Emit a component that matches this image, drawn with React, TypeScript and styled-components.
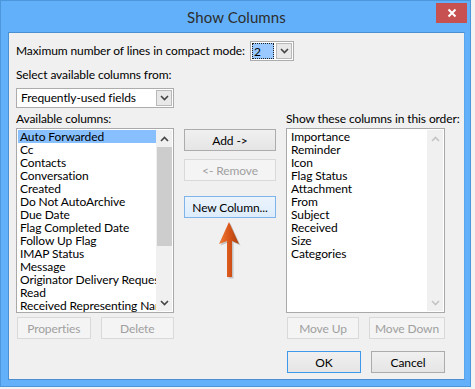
import React from "react";
import styled, { createGlobalStyle } from "styled-components";

const GlobalStyle = createGlobalStyle`
  html, body {
    margin: 0;
    padding: 0;
    background: #f3f3f3;
  }
  body {
    font-family: Lato, "Noto Sans", sans-serif;
    font-size: 12px;
    letter-spacing: -0.1px;
    color: #000;
  }
`

const Frame = styled.div`
  width: 471px;
  height: 387px;
  box-sizing: border-box;
  background: #62b0f9;
  border: 1px solid #4c96dc;
  display: flex;
  flex-direction: column;
  padding: 0 5px 6px 7px;
`

const TitleBar = styled.div`
  height: 31px;
  display: grid;
  grid-template-columns: 1fr auto 1fr;
  align-items: start;
`

const Title = styled.div`
  grid-column: 2;
  margin-top: 7px;
  font-size: 15px;
  color: #2d2d2d;
  letter-spacing: 0.1px;
`

const CloseButton = styled.div`
  grid-column: 3;
  justify-self: end;
  margin-top: 2px;
  margin-right: -2px;
  width: 31px;
  height: 20px;
  background: #c75050;
  display: flex;
  align-items: center;
  justify-content: center;
`

const Content = styled.div`
  flex: 1;
  background: #f0f0f0;
  border: 1px solid #4a8fd0;
  border-right-color: #5aa5ee;
  box-sizing: border-box;
  padding: 8px 0 0 7px;
  position: relative;
`

const Row = styled.div<{ $mt?: number }>`
  display: flex;
  align-items: center;
  gap: 5px;
  margin-top: ${p => p.$mt ?? 0}px;
`

const Label = styled.div<{ $mt?: number }>`
  height: 16px;
  line-height: 16px;
  white-space: nowrap;
  margin-top: ${p => p.$mt ?? 0}px;
`

const Combo = styled.div<{ $w: number }>`
  width: ${p => p.$w}px;
  height: 20px;
  box-sizing: border-box;
  border: 1px solid #acacac;
  background: #fff;
  display: flex;
  align-items: center;
  padding: 1px;
  gap: 2px;
`

const ComboValue = styled.div<{ $selected?: boolean }>`
  flex: 1;
  height: 16px;
  line-height: 15px;
  box-sizing: border-box;
  padding-left: ${p => (p.$selected ? 1 : 3)}px;
  background: ${p => (p.$selected ? "#99c9ff" : "transparent")};
  border: ${p => (p.$selected ? "1px dotted #222" : "none")};
`

const ComboButton = styled.div`
  width: 16px;
  height: 16px;
  box-sizing: border-box;
  border: 1px solid #b9b9b9;
  background: #e8e8e8;
  display: flex;
  align-items: center;
  justify-content: center;
`

const Grid = styled.div`
  display: grid;
  grid-template-columns: 158px 92px 159px;
  column-gap: 10px;
  margin-top: 3px;
`

const ListBox = styled.div`
  height: 185px;
  box-sizing: border-box;
  border: 1px solid #a9a9a9;
  background: #fff;
  display: flex;
  margin-top: 1px;
`

const Items = styled.div<{ $pad: number }>`
  flex: 1;
  min-width: 0;
  padding: 1px 0 0 1px;
  overflow: hidden;
  & > div {
    padding-left: ${p => p.$pad}px;
  }
`

const Item = styled.div<{ $selected?: boolean }>`
  height: 13px;
  line-height: 13px;
  white-space: nowrap;
  overflow: hidden;
  background: ${p => (p.$selected ? "#88c0ff" : "transparent")};
`

const ScrollBar = styled.div`
  width: 16px;
  margin: 1px 1px 1px 0;
  background: #f0f0f0;
  display: flex;
  flex-direction: column;
  align-items: center;
`

const ScrollArrow = styled.div`
  height: 17px;
  width: 16px;
  display: flex;
  align-items: center;
  justify-content: center;
`

const ScrollTrack = styled.div`
  flex: 1;
  width: 16px;
  display: flex;
  flex-direction: column;
`

const Thumb = styled.div`
  height: 99px;
  width: 15px;
  margin-left: 1px;
  background: #cdcdcd;
`

const Middle = styled.div`
  display: flex;
  flex-direction: column;
  padding-top: 2px;
`

const Btn = styled.div<{ $kind?: "normal" | "disabled" | "focus" | "default"; $w?: number; $mt?: number }>`
  width: ${p => (p.$w ? `${p.$w}px` : "100%")};
  height: 22px;
  margin-top: ${p => p.$mt ?? 0}px;
  box-sizing: border-box;
  display: flex;
  align-items: center;
  justify-content: center;
  white-space: nowrap;
  border: 1px solid
    ${p =>
      p.$kind === "disabled" ? "#d9d9d9" : p.$kind === "focus" ? "#7eb4ea" : p.$kind === "default" ? "#3c99ec" : "#acacac"};
  background: ${p =>
    p.$kind === "disabled"
      ? "#f4f4f4"
      : p.$kind === "focus"
      ? "linear-gradient(#ecf4fc, #dcecfc)"
      : "linear-gradient(#f0f0f0, #e5e5e5)"};
  color: ${p => (p.$kind === "disabled" ? "#a0a0a0" : "#000")};
`

const ButtonPair = styled.div<{ $mt: number; $gap: number }>`
  display: flex;
  gap: ${p => p.$gap}px;
  margin-top: ${p => p.$mt}px;
  padding-left: 1px;
`

const ArrowMark = styled.svg`
  position: absolute;
  left: 208px;
  top: 188px;
`

const Chevron = ({ color = "#444", up = false }: { color?: string; up?: boolean }) => (
  <svg width="9" height="6" viewBox="0 0 9 6">
    <path
      d={up ? "M1 5 L4.5 1.5 L8 5" : "M1 1 L4.5 4.5 L8 1"}
      fill="none"
      stroke={color}
      strokeWidth="1.6"
    />
  </svg>
)

const available = [
  "Auto Forwarded",
  "Cc",
  "Contacts",
  "Conversation",
  "Created",
  "Do Not AutoArchive",
  "Due Date",
  "Flag Completed Date",
  "Follow Up Flag",
  "IMAP Status",
  "Message",
  "Originator Delivery Requested",
  "Read",
  "Received Representing Name",
]

const shown = [
  "Importance",
  "Reminder",
  "Icon",
  "Flag Status",
  "Attachment",
  "From",
  "Subject",
  "Received",
  "Size",
  "Categories",
]

export default function App() {
  return (
    <>
      <GlobalStyle />
      <Frame>
        <TitleBar>
          <Title>Show Columns</Title>
          <CloseButton>
            <svg width="10" height="10" viewBox="0 0 10 10">
              <path d="M1.5 1.5 L8.5 8.5 M8.5 1.5 L1.5 8.5" stroke="#fff" strokeWidth="2" />
            </svg>
          </CloseButton>
        </TitleBar>
        <Content>
          <Row>
            <Label>Maximum number of lines in compact mode:</Label>
            <Combo $w={44}>
              <ComboValue $selected>2</ComboValue>
              <ComboButton>
                <Chevron />
              </ComboButton>
            </Combo>
          </Row>
          <Label $mt={6}>Select available columns from:</Label>
          <Row $mt={5}>
            <Combo $w={158}>
              <ComboValue>Frequently-used fields</ComboValue>
              <ComboButton>
                <Chevron />
              </ComboButton>
            </Combo>
          </Row>
          <Grid>
            <Label>Available columns:</Label>
            <div />
            <Label>Show these columns in this order:</Label>

            <ListBox>
              <Items $pad={2}>
                {available.map((name, i) => (
                  <Item key={name} $selected={i === 0}>
                    {name}
                  </Item>
                ))}
              </Items>
              <ScrollBar>
                <ScrollArrow>
                  <Chevron up />
                </ScrollArrow>
                <ScrollTrack>
                  <Thumb />
                </ScrollTrack>
                <ScrollArrow>
                  <Chevron />
                </ScrollArrow>
              </ScrollBar>
            </ListBox>

            <Middle>
              <Btn $kind="normal">Add -&gt;</Btn>
              <Btn $kind="disabled" $mt={8}>&lt;- Remove</Btn>
              <Btn $kind="focus" $mt={15}>New Column...</Btn>
            </Middle>

            <ListBox>
              <Items $pad={3}>
                {shown.map(name => (
                  <Item key={name}>{name}</Item>
                ))}
              </Items>
              <ScrollBar>
                <ScrollArrow>
                  <Chevron up color="#c4c4c4" />
                </ScrollArrow>
                <ScrollTrack />
                <ScrollArrow>
                  <Chevron color="#c4c4c4" />
                </ScrollArrow>
              </ScrollBar>
            </ListBox>

            <ButtonPair $mt={4} $gap={10}>
              <Btn $kind="disabled" $w={74}>Properties</Btn>
              <Btn $kind="disabled" $w={74}>Delete</Btn>
            </ButtonPair>
            <div />
            <ButtonPair $mt={4} $gap={10}>
              <Btn $kind="disabled" $w={74}>Move Up</Btn>
              <Btn $kind="disabled" $w={78}>Move Down</Btn>
            </ButtonPair>

            <div />
            <div />
            <ButtonPair $mt={12} $gap={10}>
              <Btn $kind="default" $w={74}>OK</Btn>
              <Btn $kind="normal" $w={74}>Cancel</Btn>
            </ButtonPair>
          </Grid>

          <ArrowMark width="26" height="60" viewBox="0 0 26 60">
            <defs>
              <linearGradient id="arrowFill" x1="0" x2="1" y1="0" y2="0">
                <stop offset="0" stopColor="#f0803a" />
                <stop offset="0.5" stopColor="#d9561a" />
                <stop offset="1" stopColor="#a8400f" />
              </linearGradient>
            </defs>
            <path
              d="M12 1 L22 23 L15 20 L15 56 L10 56 L10 20 L2 23 Z"
              fill="#000"
              opacity="0.18"
              transform="translate(1.5,1.5)"
            />
            <path d="M12 1 L22 23 L15 20 L15 56 L10 56 L10 20 L2 23 Z" fill="url(#arrowFill)" />
          </ArrowMark>
        </Content>
      </Frame>
    </>
  )
}
